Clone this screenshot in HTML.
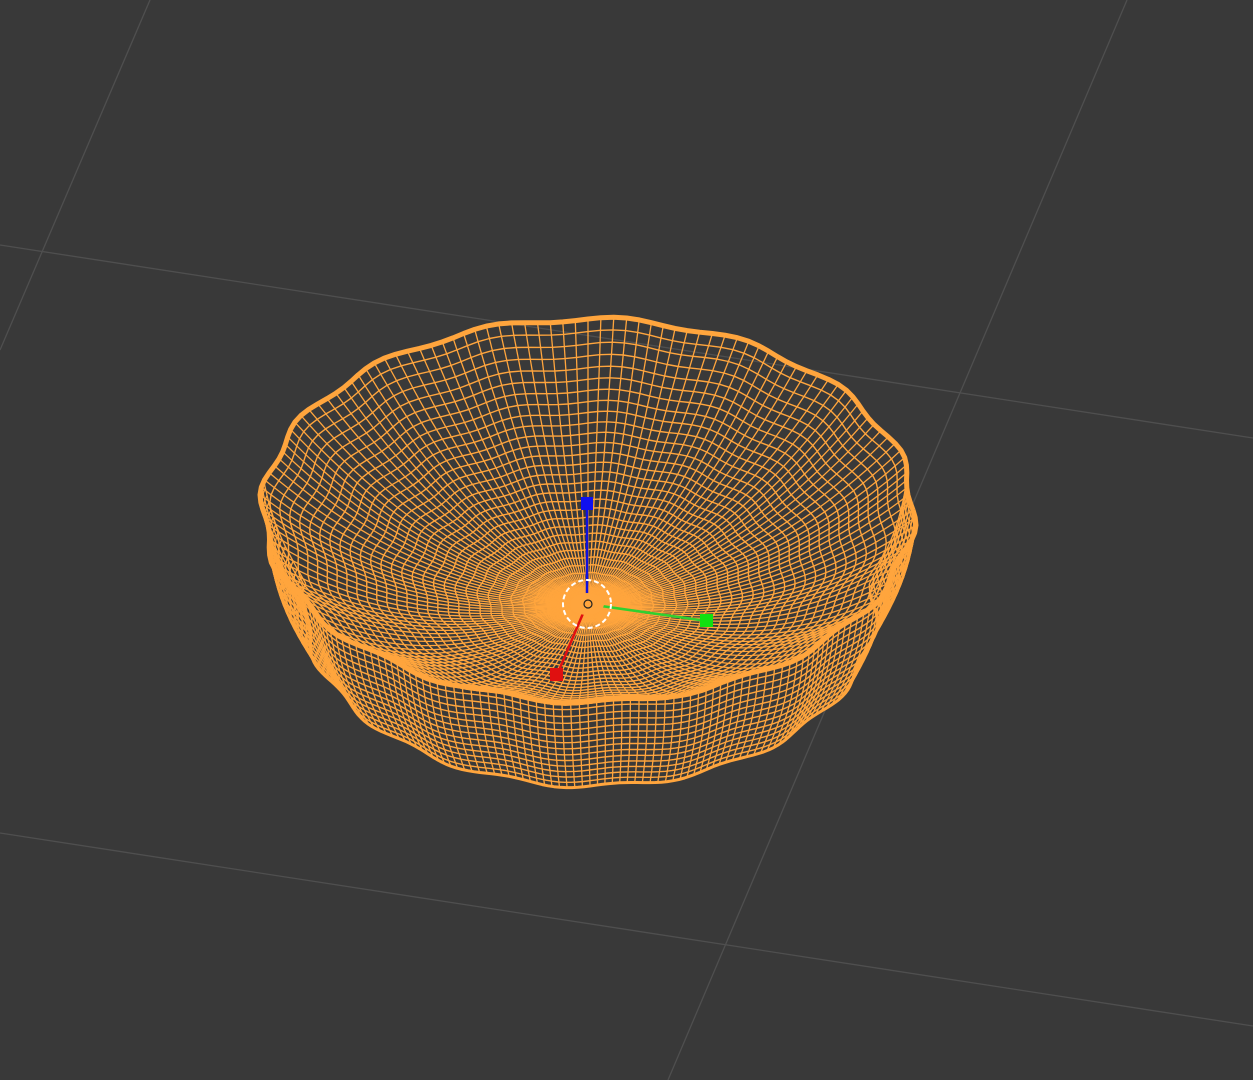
<!DOCTYPE html>
<html><head><meta charset="utf-8"><style>
html,body{margin:0;padding:0;background:#393939;width:1253px;height:1080px;overflow:hidden}
svg{display:block}
</style></head><body>
<svg id="s" width="1253" height="1080" viewBox="0 0 1253 1080">
<rect width="1253" height="1080" fill="#393939"/>
<g stroke="#4f4f4f" stroke-width="1.3" fill="none">
<line x1="0" y1="245" x2="1253" y2="438"/>
<line x1="0" y1="833" x2="1253" y2="1026"/>
<line x1="1127" y1="0" x2="668" y2="1080"/>
<line x1="150" y1="0" x2="0" y2="350"/>
</g>
<g id="w" stroke="#ffa53d" fill="none" stroke-linejoin="round"></g>
<g id="giz">
<line x1="587" y1="604" x2="587" y2="503" stroke="#1010e0" stroke-width="2.5"/>
<rect x="581" y="497" width="12" height="13" fill="#1010f0"/>
<line x1="587" y1="604" x2="707" y2="621" stroke="#30d030" stroke-width="2.5"/>
<rect x="700" y="614" width="13" height="13" fill="#10e010"/>
<line x1="587" y1="604" x2="557" y2="675" stroke="#e01010" stroke-width="2.5"/>
<rect x="550" y="668" width="13" height="13" fill="#e01010"/>
<ellipse cx="587" cy="604" rx="17" ry="11" fill="#ffa53d"/>
<circle cx="587" cy="604" r="24" fill="none" stroke="#fff" stroke-width="2" stroke-dasharray="5 3"/>
<circle cx="588" cy="604" r="4" fill="none" stroke="#222" stroke-width="1.2"/>
</g>
</svg>
<script>
(function(){
var g=document.getElementById('w');
function wave(th){return 1+0.013*Math.sin(16*th);}
function inner(th,t){
 var s=1-t; var r=Math.pow(s,0.9)*wave(th);
 var cy=510+ (605-510)*(1-Math.pow(s,2.2));
 return [588+325*r*Math.cos(th), cy+191*r*Math.sin(th)];
}
function outer(th,u){
 var w=wave(th);
 var cx=588+ (590-588)*u, cy=510+(610-510)*u, rx=325*(1-u)+285*u, ry=191*(1-u)+176*u;
 var bulge=Math.sin(u*Math.PI)*0.02;
 return [cx+rx*(w+bulge)*Math.cos(th), cy+ry*(w+bulge)*Math.sin(th)];
}
function path(pts,sw){var d='M'+pts.map(function(p){return p[0].toFixed(1)+' '+p[1].toFixed(1)}).join('L');
 var e=document.createElementNS('http://www.w3.org/2000/svg','path');e.setAttribute('d',d);e.setAttribute('stroke-width',sw);g.appendChild(e);}
var N=160,i,j,pts;
for(j=0;j<=14;j++){pts=[];for(i=0;i<=N;i++){var th=-0.15+ (Math.PI+0.3)*i/N;pts.push(outer(th,j/14));}path(pts,1.4);}
for(i=0;i<=130;i++){var th=-0.15+(Math.PI+0.3)*i/130;pts=[];for(j=0;j<=14;j++)pts.push(outer(th,j/14));path(pts,1.3);}
for(j=1;j<=28;j++){pts=[];var t=j/30;for(i=0;i<=N;i++){pts.push(inner(2*Math.PI*i/N,t));}path(pts,1.4);}
for(i=0;i<160;i++){var th=2*Math.PI*i/160;pts=[];for(j=0;j<=30;j++)pts.push(inner(th,j/30));path(pts,1.3);}
pts=[];for(i=0;i<=N;i++)pts.push(inner(2*Math.PI*i/N,0));path(pts,5);
pts=[];for(i=0;i<=N;i++){var th=-0.1+(Math.PI+0.2)*i/N;pts.push(outer(th,1));}path(pts,3);
})();
</script>
</body></html>
